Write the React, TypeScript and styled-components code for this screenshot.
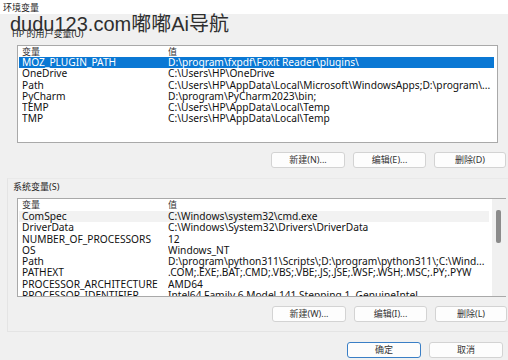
import styled, { createGlobalStyle } from 'styled-components';

const GlobalStyle = createGlobalStyle`
  html, body {
    margin: 0;
    padding: 0;
    background: #f0f0f0;
  }
`;

type Row = { name: string; value: string };

const userVars: Row[] = [
  { name: 'MOZ_PLUGIN_PATH', value: 'D:\\program\\fxpdf\\Foxit Reader\\plugins\\' },
  { name: 'OneDrive', value: 'C:\\Users\\HP\\OneDrive' },
  { name: 'Path', value: 'C:\\Users\\HP\\AppData\\Local\\Microsoft\\WindowsApps;D:\\program\\...' },
  { name: 'PyCharm', value: 'D:\\program\\PyCharm2023\\bin;' },
  { name: 'TEMP', value: 'C:\\Users\\HP\\AppData\\Local\\Temp' },
  { name: 'TMP', value: 'C:\\Users\\HP\\AppData\\Local\\Temp' },
];

const systemVars: Row[] = [
  { name: 'ComSpec', value: 'C:\\Windows\\system32\\cmd.exe' },
  { name: 'DriverData', value: 'C:\\Windows\\System32\\Drivers\\DriverData' },
  { name: 'NUMBER_OF_PROCESSORS', value: '12' },
  { name: 'OS', value: 'Windows_NT' },
  { name: 'Path', value: 'D:\\program\\python311\\Scripts\\;D:\\program\\python311\\;C:\\Wind...' },
  { name: 'PATHEXT', value: '.COM;.EXE;.BAT;.CMD;.VBS;.VBE;.JS;.JSE;.WSF;.WSH;.MSC;.PY;.PYW' },
  { name: 'PROCESSOR_ARCHITECTURE', value: 'AMD64' },
  { name: 'PROCESSOR_IDENTIFIER', value: 'Intel64 Family 6 Model 141 Stepping 1, GenuineIntel' },
];

export default function App() {
  return (
    <>
      <GlobalStyle />
      <Window>
        <TitleBar>环境变量</TitleBar>
        <Watermark>dudu123.com嘟嘟Ai导航</Watermark>
        <Body>
          <Section>
            <Label>HP 的用户变量(U)</Label>
            <List height={98}>
              <Header>
                <NameCell>变量</NameCell>
                <ValueCell>值</ValueCell>
              </Header>
              {userVars.map((row, i) => (
                <ListRow key={`u_${i}`} state={i === 0 ? 'active' : 'none'}>
                  <NameCell>{row.name}</NameCell>
                  <ValueCell>{row.value}</ValueCell>
                </ListRow>
              ))}
            </List>
            <ButtonRow>
              <Button width={74}>新建(N)...</Button>
              <Button width={73}>编辑(E)...</Button>
              <Button width={72}>删除(D)</Button>
            </ButtonRow>
          </Section>
          <SystemGroup>
            <Label>系统变量(S)</Label>
            <ListWrap>
              <List height={99} wide>
                <Header tall>
                  <NameCell>变量</NameCell>
                  <ValueCell>值</ValueCell>
                </Header>
                {systemVars.map((row, i) => (
                  <ListRow key={`s_${i}`} state={i === 0 ? 'inactive' : 'none'}>
                    <NameCell>{row.name}</NameCell>
                    <ValueCell>{row.value}</ValueCell>
                  </ListRow>
                ))}
              </List>
              <ScrollTrack>
                <ScrollThumb />
              </ScrollTrack>
            </ListWrap>
            <ButtonRow>
              <Button width={74}>新建(W)...</Button>
              <Button width={73}>编辑(I)...</Button>
              <Button width={72}>删除(L)</Button>
            </ButtonRow>
          </SystemGroup>
          <Footer>
            <Button width={74} primary>
              确定
            </Button>
            <Button width={74}>取消</Button>
          </Footer>
        </Body>
      </Window>
    </>
  );
}

const Window = styled.div`
  position: relative;
  width: 508px;
  height: 360px;
  overflow: hidden;
  background: #f0f0f0;
  font-family: 'Noto Sans', 'Noto Sans CJK SC', sans-serif;
  font-size: 9px;
  color: #111;
`;

const TitleBar = styled.div`
  height: 14px;
  box-sizing: border-box;
  padding: 2px 0 0 3px;
  background: #ffffff;
  font-size: 9px;
  line-height: 11px;
  color: #222;
`;

const Watermark = styled.div`
  position: absolute;
  left: 10px;
  top: 12px;
  font-family: 'Liberation Sans', 'Noto Sans CJK SC', sans-serif;
  font-size: 20px;
  line-height: 24px;
  color: #2e2e2e;
  white-space: nowrap;
  pointer-events: none;
`;

const Body = styled.div`
  padding-top: 14px;
`;

const Section = styled.div`
  padding-left: 12px;
`;

const SystemGroup = styled.div`
  margin: 10px 0 0 7px;
  padding: 2px 0 9px 5px;
  border-left: 1px solid #e4e4e4;
  border-bottom: 1px solid #e4e4e4;
  border-top: 1px solid #e9e9e9;
`;

const Label = styled.div`
  height: 12px;
  line-height: 12px;
  font-size: 9px;
  color: #222;
`;

const ListWrap = styled.div`
  display: flex;
  margin-top: 5px;
  margin-left: 4px;
`;

const List = styled.div<{ height: number; wide?: boolean }>`
  box-sizing: border-box;
  width: ${(p) => (p.wide ? 475 : 481)}px;
  height: ${(p) => p.height}px;
  margin: ${(p) => (p.wide ? '0' : '5px 0 0 5px')};
  background: #ffffff;
  border: 1px solid #a9a9a9;
  ${(p) => (p.wide ? 'border-right: none;' : '')}
  overflow: hidden;
  font-size: 10.2px;
`;

const Header = styled.div<{ tall?: boolean }>`
  display: flex;
  height: ${(p) => (p.tall ? 12 : 11)}px;
  line-height: ${(p) => (p.tall ? 12 : 11)}px;
  padding-left: 4px;
  font-size: 9px;
  color: #333;
`;

const ListRow = styled.div<{ state: 'active' | 'inactive' | 'none' }>`
  display: flex;
  height: 11.25px;
  line-height: 11.25px;
  margin: 0 3px 0 1px;
  padding-left: 3px;
  white-space: nowrap;
  background: ${(p) =>
    p.state === 'active' ? '#0a78d4' : p.state === 'inactive' ? '#f2f2f2' : 'transparent'};
  color: ${(p) => (p.state === 'active' ? '#ffffff' : '#111')};
`;

const NameCell = styled.div`
  width: 146px;
  flex-shrink: 0;
  overflow-x: clip;
  overflow-y: visible;
`;

const ValueCell = styled.div`
  flex: 1;
  min-width: 0;
  overflow-x: clip;
  overflow-y: visible;
  white-space: nowrap;
`;

const ScrollTrack = styled.div`
  width: 14px;
  height: 99px;
  box-sizing: border-box;
  border-top: 1px solid #a9a9a9;
  border-bottom: 1px solid #a9a9a9;
  background: #f0f0f0;
  padding: 11px 0 0 4px;
  flex-shrink: 0;
`;

const ScrollThumb = styled.div`
  width: 5px;
  height: 33px;
  border-radius: 2px;
  background: #8b8b8b;
`;

const ButtonRow = styled.div`
  display: flex;
  gap: 8px;
  margin: 9px 0 0 259px;
`;

const Button = styled.div<{ width: number; primary?: boolean }>`
  box-sizing: border-box;
  width: ${(p) => p.width}px;
  height: 16px;
  line-height: 14px;
  text-align: center;
  font-size: 9px;
  color: #333;
  background: #fdfdfd;
  border: 1px solid ${(p) => (p.primary ? '#3a7fc6' : '#d3d3d3')};
  border-radius: 3px;
`;

const Footer = styled.div`
  display: flex;
  gap: 8px;
  margin: 10px 0 0 347px;
`;
